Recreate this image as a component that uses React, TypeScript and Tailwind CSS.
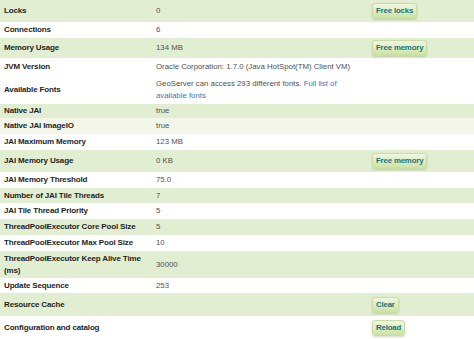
type Row = {
  label: string;
  value?: React.ReactNode;
  action?: string;
  h: string;
  bg: string;
};

const GREEN = 'bg-[#e2eed2]';
const LIGHT = 'bg-[#f2f7e9]';
const WHITE = 'bg-white';

const rows: Row[] = [
  { label: 'Locks', value: '0', action: 'Free locks', h: 'h-[22px]', bg: GREEN },
  { label: 'Connections', value: '6', h: 'h-[16px]', bg: WHITE },
  { label: 'Memory Usage', value: '134 MB', action: 'Free memory', h: 'h-[20px]', bg: GREEN },
  { label: 'JVM Version', value: 'Oracle Corporation: 1.7.0 (Java HotSpot(TM) Client VM)', h: 'h-[17px]', bg: WHITE },
  {
    label: 'Available Fonts',
    value: (
      <>
        GeoServer can access 293 different fonts.{' '}
        <a className="text-[#2f7bb5]">Full list of available fonts</a>
      </>
    ),
    h: 'h-[29px]',
    bg: WHITE,
  },
  { label: 'Native JAI', value: 'true', h: 'h-[14px]', bg: GREEN },
  { label: 'Native JAI ImageIO', value: 'true', h: 'h-[16px]', bg: LIGHT },
  { label: 'JAI Maximum Memory', value: '123 MB', h: 'h-[16px]', bg: WHITE },
  { label: 'JAI Memory Usage', value: '0 KB', action: 'Free memory', h: 'h-[22px]', bg: GREEN },
  { label: 'JAI Memory Threshold', value: '75.0', h: 'h-[16px]', bg: WHITE },
  { label: 'Number of JAI Tile Threads', value: '7', h: 'h-[15px]', bg: GREEN },
  { label: 'JAI Tile Thread Priority', value: '5', h: 'h-[16px]', bg: WHITE },
  { label: 'ThreadPoolExecutor Core Pool Size', value: '5', h: 'h-[16px]', bg: GREEN },
  { label: 'ThreadPoolExecutor Max Pool Size', value: '10', h: 'h-[16px]', bg: WHITE },
  { label: 'ThreadPoolExecutor Keep Alive Time (ms)', value: '30000', h: 'h-[27px]', bg: GREEN },
  { label: 'Update Sequence', value: '253', h: 'h-[15px]', bg: WHITE },
  { label: 'Resource Cache', action: 'Clear', h: 'h-[23px]', bg: GREEN },
  { label: 'Configuration and catalog', action: 'Reload', h: 'h-[23px]', bg: WHITE },
];

function ActionButton({ children }: { children: string }) {
  return (
    <button className="h-[16px] px-[3px] rounded-[3px] border border-[#c9dca6] bg-gradient-to-b from-[#f0f7df] to-[#cce2a2] shadow-[0_1px_2px_rgba(120,150,80,0.35)] text-[7.8px] font-bold leading-none tracking-[-0.15px] text-[#22707e]">
      {children}
    </button>
  );
}

export default function App() {
  return (
    <div className="w-[474px] h-[339px] overflow-hidden bg-white font-['Liberation_Sans',Arial,sans-serif] text-[8px] leading-[12px]">
      {rows.map((row, i) => (
        <div key={i} className={`flex items-center ${row.h} ${row.bg}`}>
          <div className="w-[156px] shrink-0 pl-[4px] pr-[10px] font-bold tracking-[-0.15px] text-[#1e1e1e]">{row.label}</div>
          <div className="w-[216px] shrink-0 pr-[16px] text-[7.8px] text-[#505050]">{row.value}</div>
          <div className="flex-1">{row.action && <ActionButton>{row.action}</ActionButton>}</div>
        </div>
      ))}
    </div>
  );
}
